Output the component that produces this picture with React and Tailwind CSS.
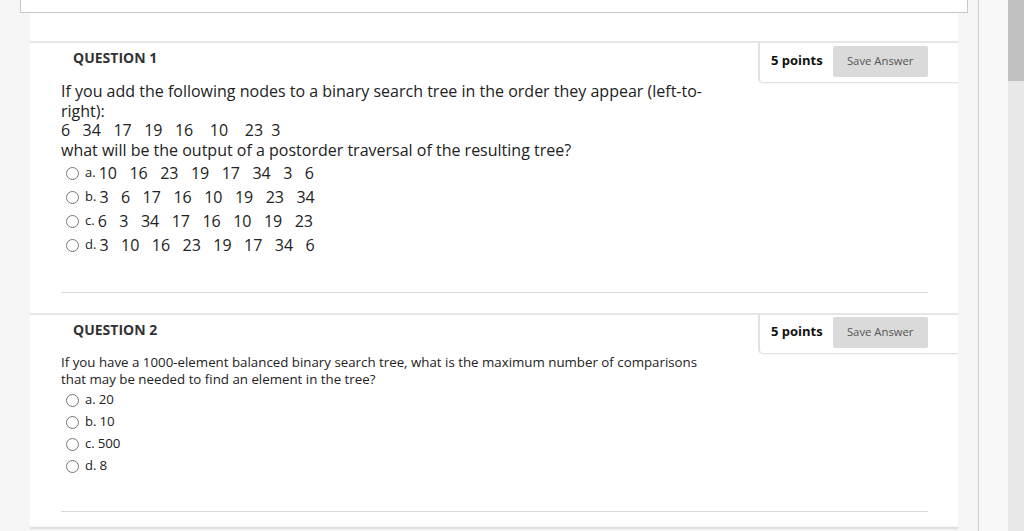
import React from 'react'

const questions = [
  {
    n: 1,
    big: true,
    text: [
      'If you add the following nodes to a binary search tree in the order they appear (left-to-right):',
      '6   34   17   19   16    10    23  3',
      'what will be the output of a postorder traversal of the resulting tree?',
    ],
    opts: [
      ['a.', '10   16   23   19   17   34   3   6'],
      ['b.', '3   6   17   16   10   19   23   34'],
      ['c.', '6   3   34   17   16   10   19   23'],
      ['d.', '3   10   16   23   19   17   34   6'],
    ],
  },
  {
    n: 2,
    big: false,
    text: [
      'If you have a 1000-element balanced binary search tree, what is the maximum number of comparisons that may be needed to find an element in the tree?',
    ],
    opts: [
      ['a.', '20'],
      ['b.', '10'],
      ['c.', '500'],
      ['d.', '8'],
    ],
  },
]

function Radio() {
  return <span className="inline-block w-[13px] h-[13px] rounded-full border border-[#767676] bg-white shrink-0" />
}

function Question({ q }) {
  return (
    <div className="border-t-2 border-[#e6e6e6]">
      <div className="flex items-start">
        <div className="flex-1">
          <div className="pl-[43px] pt-[6px] text-[14px] leading-[18px] font-bold text-[#333]">QUESTION {q.n}</div>
          {q.big ? (
            <div className="ml-[31px] w-[662px] mt-[15px] text-[16px] leading-[19.5px] text-[#222]">
              {q.text.map((t, i) => (
                <div key={i} className="whitespace-pre-wrap">{t}</div>
              ))}
            </div>
          ) : (
            <div className="ml-[31px] w-[662px] mt-[15px] text-[13.3px] leading-[17px] text-[#222]">
              {q.text.map((t, i) => (
                <div key={i}>{t}</div>
              ))}
            </div>
          )}
          <div className="ml-[36px] mt-[1px]">
            {q.opts.map(([l, a]) => (
              <div key={l} className={`flex items-center ${q.big ? 'h-[24px]' : 'h-[22px]'} text-[#222]`}>
                <Radio />
                <span className="ml-[6px] text-[13px]">{l}</span>
                <span className={`whitespace-pre ${q.big ? 'ml-[3px] text-[16px]' : 'ml-[3px] text-[13.3px]'}`}>{a}</span>
              </div>
            ))}
          </div>
        </div>
        <div className={`w-[200px] ${q.big ? 'h-[40px] pt-[3px]' : 'h-[39px] pt-[2px]'} border-l-2 border-b border-[#e2e2e2] rounded-bl-[5px] flex items-start pl-[11px] shadow-[0_1px_1px_rgba(0,0,0,0.04)]`}>
          <span className="h-[30px] flex items-center text-[13px] font-bold text-[#111]">5 points</span>
          <button className="ml-[10px] w-[95px] h-[31px] bg-[#dadada] rounded-[2px] text-[11.3px] text-[#555]">Save Answer</button>
        </div>
      </div>
      <div className={`ml-[31px] mr-[30px] ${q.big ? 'mt-[35px]' : 'mt-[34px]'} border-t border-[#d6d6d6]`} />
    </div>
  )
}

export default function App() {
  return (
    <div className="flex h-[531px] w-[1024px] overflow-hidden bg-[#f5f5f5] font-['Open_Sans',sans-serif]">
      <div className="w-[979px] border-r border-[#cfcfcf] flex flex-col">
        <div className="ml-[20px] w-[948px] h-[13px] shrink-0 bg-white border-x border-b border-[#c8c8c8]" />
        <div className="ml-[30px] w-[928px] flex-1 bg-white pt-[28px] flex flex-col">
          <Question q={questions[0]} />
          <div className="h-[20px] shrink-0" />
          <Question q={questions[1]} />
          <div className="h-[15px] shrink-0" />
          <div className="flex-1 border-t-2 border-[#e0e0e0] bg-[#f3f3f3] shadow-[0_-1px_2px_rgba(0,0,0,0.05)]" />
        </div>
      </div>
      <div className="w-[29px] bg-[#f8f8f8]" />
      <div className="w-[16px] bg-[#e8e8e8]">
        <div className="h-[81px] bg-[#c1c1c1]" />
      </div>
    </div>
  )
}
